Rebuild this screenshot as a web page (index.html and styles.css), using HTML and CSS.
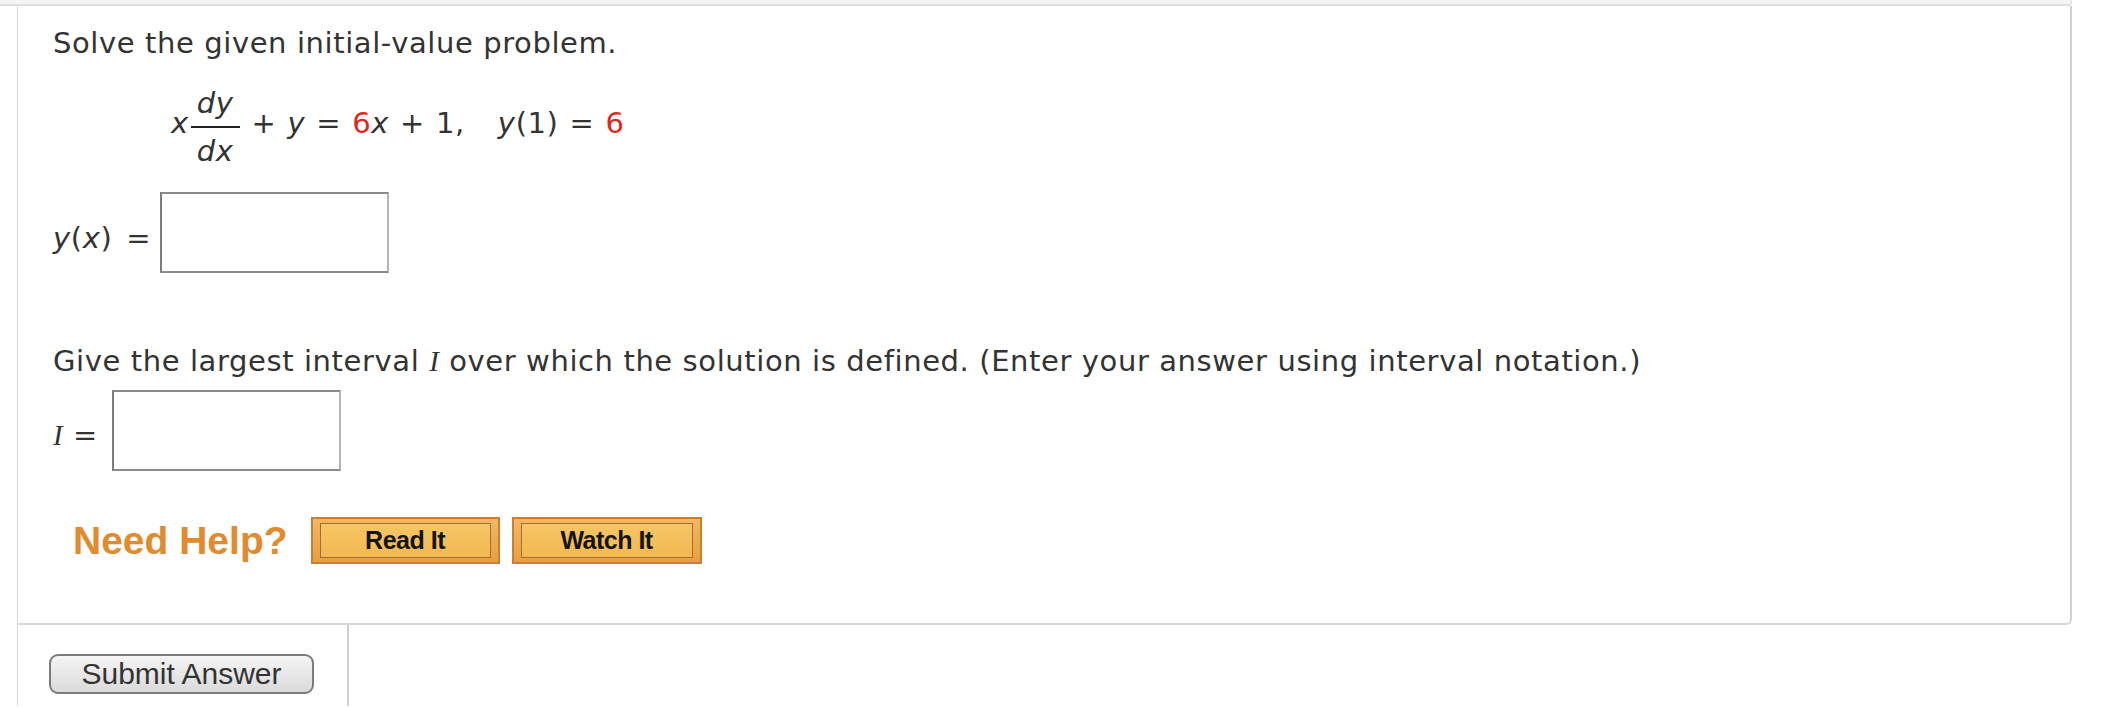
FILE: index.html
```html
<!DOCTYPE html>
<html>
	<head>
		<meta http-equiv="Content-Type" content="text/html; charset=utf-8">
		<title>Question</title>
		<link rel="stylesheet" href="styles.css">
	</head>
	<body>
		<div class="topbar"></div>

		<div class="question">
			<p class="prompt">Solve the given initial-value problem.</p>

			<div class="equation">
				<i>x</i><span class="frac"><span class="num"><i>dy</i></span><span class="den"><i>dx</i></span></span>+ <i>y</i> = <span class="red">6</span><i>x</i> + 1,&nbsp;&nbsp; <i>y</i>(1) = <span class="red">6</span>
			</div>

			<div class="answer-row first">
				<span class="label"><i>y</i>(<i>x</i>) <span class="eq">=</span></span>
				<input class="answer" type="text">
			</div>

			<p class="prompt second">Give the largest interval <i class="math">I</i> over which the solution is defined. (Enter your answer using interval notation.)</p>

			<div class="answer-row interval">
				<span class="label"><i class="math">I</i> =</span>
				<input class="answer" type="text">
			</div>

			<div class="help">
				<span class="need-help">Need Help?</span>
				<button class="help-btn"><span>Read It</span></button>
				<button class="help-btn watch"><span>Watch It</span></button>
			</div>
		</div>

		<div class="footer">
			<div class="submit-cell">
				<button class="submit">Submit Answer</button>
			</div>
			<div class="filler"></div>
		</div>
	</body>
</html>
```

FILE: styles.css
```css
body{
	margin: 0;
	padding: 0;
	overflow: hidden;
	background: #fff;
	color: #333;
	font-family: "DejaVu Sans", Verdana, sans-serif;
	font-size: 29px;
	line-height: 34px;
	letter-spacing: 0.6px;
}

.topbar{
	width: 2072px;
	height: 6px;
	box-sizing: border-box;
	background: #f4f4f4;
	border-bottom: 2px solid #dedede;
	border-right: 1px solid #e2e2e2;
	border-bottom-right-radius: 4px;
}

.question{
	margin-left: 17px;
	width: 2055px;
	box-sizing: border-box;
	border-left: 1px solid #d9d9d9;
	border-right: 2px solid #d2d2d2;
	border-bottom: 2px solid #d8d8d8;
	border-bottom-right-radius: 6px;
	padding: 20px 0 59px 35px;
}

.prompt{
	margin: 0;
}

.prompt.second{
	margin-top: 71px;
}

i.math{
	font-family: "Liberation Serif", "Times New Roman", serif;
}

.equation{
	margin: 28px 0 0 118px;
	word-spacing: 1.2px;
}

.frac{
	display: inline-flex;
	flex-direction: column;
	align-items: center;
	vertical-align: 20px;
	margin: 0 12px 0 2px;
	word-spacing: 0;
}

.frac .num{
	padding: 0 6px 8px;
	border-bottom: 2px solid #222;
	line-height: 30px;
}

.frac .den{
	padding-top: 8px;
	line-height: 30px;
}

.red{
	color: #e3261b;
}

.answer-row{
	display: flex;
	align-items: center;
	gap: 9px;
	margin-top: 26px;
}

.answer-row .label{
	padding-top: 11px;
}

.answer-row.interval{
	margin-top: 12px;
	gap: 14px;
}

.answer-row.interval .label{
	padding-top: 8px;
}

.eq{
	margin-left: 4px;
}

.answer{
	width: 229px;
	height: 81px;
	box-sizing: border-box;
	margin: 0;
	padding: 0;
	background: #fff;
	border: 2px solid #8a8a8a;
	border-left-color: #7c7c7c;
	border-right-color: #b4b4b4;
}

.help{
	display: flex;
	align-items: center;
	margin: 46px 0 0 20px;
	letter-spacing: 0;
}

.need-help{
	font-family: "Liberation Sans", Arial, sans-serif;
	font-weight: bold;
	font-size: 39px;
	line-height: 45px;
	color: #e28a2e;
	margin-right: 23px;
}

.help-btn{
	width: 189px;
	height: 47px;
	box-sizing: border-box;
	margin: 0 12px 0 0;
	padding: 4px 7px 6px;
	border: 2px solid #cc7f30;
	background: linear-gradient(#f2b767, #e6a040);
	cursor: pointer;
}

.help-btn.watch{
	width: 190px;
}

.help-btn span{
	display: flex;
	align-items: center;
	justify-content: center;
	height: 100%;
	border: 1px solid #a86c2e;
	background: linear-gradient(#f6c565, #f2b951);
	font-family: "Liberation Sans", Arial, sans-serif;
	font-weight: bold;
	font-size: 25px;
	color: #141414;
	letter-spacing: -0.5px;
}

.footer{
	display: flex;
	margin-left: 17px;
	height: 81px;
}

.submit-cell{
	width: 330px;
	box-sizing: border-box;
	border-left: 1px solid #d9d9d9;
	padding: 29px 0 0 31px;
}

.filler{
	flex: 1;
	border-left: 2px solid #cfcfcf;
}

.submit{
	width: 265px;
	height: 40px;
	box-sizing: border-box;
	padding: 0;
	border: 2px solid #7b7b7b;
	border-radius: 9px;
	background: linear-gradient(#f5f5f5, #dadada);
	font-family: "Liberation Sans", Arial, sans-serif;
	font-size: 30px;
	color: #333;
	letter-spacing: 0;
}
```
